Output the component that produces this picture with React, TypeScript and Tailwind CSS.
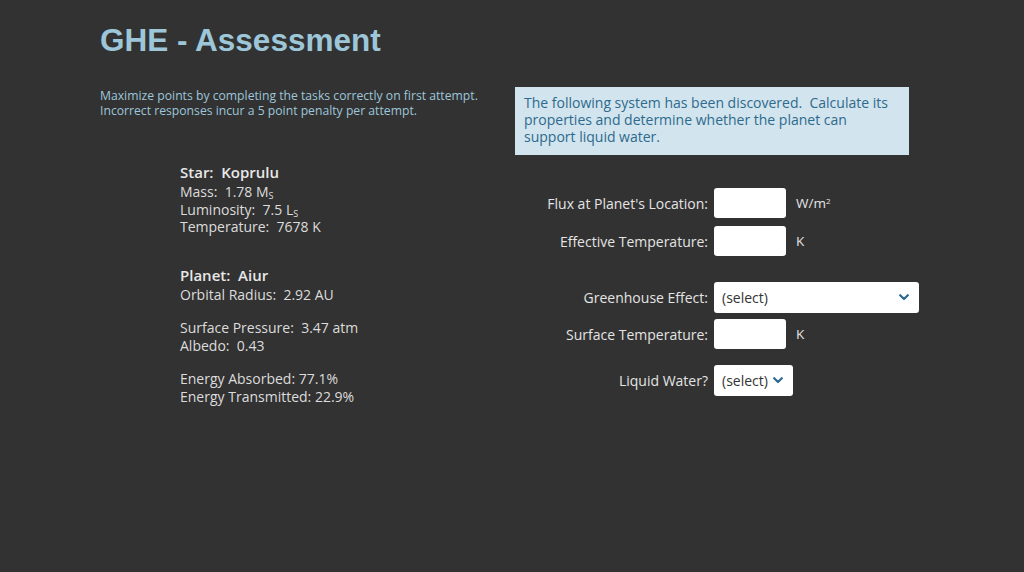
function Chevron() {
  return (
    <svg width="10" height="7" viewBox="0 0 10 7" className="shrink-0">
      <path d="M1.2 1.2 L5 5 L8.8 1.2" fill="none" stroke="#2c6a8f" strokeWidth="2.2" strokeLinecap="round" strokeLinejoin="round" />
    </svg>
  );
}

function Field({ label, unit, className }: { label: string; unit?: React.ReactNode; className?: string }) {
  return (
    <div className={`flex items-center ${className ?? ""}`}>
      <div className="w-[199px] text-right pr-[6px] text-[14px] text-[#e4e4e4]">{label}</div>
      <div className="w-[72px] h-[30px] bg-white rounded-[3px]" />
      {unit && <div className="ml-[10px] text-[13.5px] text-[#e4e4e4]">{unit}</div>}
    </div>
  );
}

function Select({ label, width, className }: { label: string; width: string; className?: string }) {
  return (
    <div className={`flex items-center ${className ?? ""}`}>
      <div className="w-[199px] text-right pr-[6px] text-[14px] text-[#e4e4e4]">{label}</div>
      <div className={`${width} h-[31px] bg-white rounded-[3px] flex items-center justify-between pl-[8px] pr-[10px] text-[14px] text-[#333]`}>
        <span>(select)</span>
        <Chevron />
      </div>
    </div>
  );
}

export default function App() {
  return (
    <div
      className="w-[1024px] h-[572px] bg-[#323232] pl-[100px] overflow-hidden"
      style={{ fontFamily: "'Open Sans', 'Liberation Sans', sans-serif" }}
    >
      <h1
        className="pt-[22px] text-[31.5px] leading-[36px] font-bold text-[#9dc6d9]"
        style={{ fontFamily: "'Liberation Sans', Arial, sans-serif" }}
      >
        GHE - Assessment
      </h1>

      <div className="flex mt-[29px]">
        {/* left column */}
        <div className="w-[415px]">
          <p className="mt-[1px] text-[12.2px] leading-[15px] text-[#9dc6d9]">
            Maximize points by completing the tasks correctly on first attempt.
            <br />
            Incorrect responses incur a 5 point penalty per attempt.
          </p>

          <div className="ml-[80px] mt-[43px] text-[14px] leading-[17.5px] text-[#dcdcdc]">
            <div className="text-[15px] leading-[22px] font-semibold text-[#e8e8e8]">Star:&nbsp; Koprulu</div>
            <div>
              Mass:&nbsp; 1.78 M<sub className="text-[9px] leading-none">S</sub>
            </div>
            <div>
              Luminosity:&nbsp; 7.5 L<sub className="text-[9px] leading-none">S</sub>
            </div>
            <div>Temperature:&nbsp; 7678 K</div>

            <div className="mt-[28px] text-[15px] leading-[22px] font-semibold text-[#e8e8e8]">Planet:&nbsp; Aiur</div>
            <div>Orbital Radius:&nbsp; 2.92 AU</div>

            <div className="mt-[16px]">Surface Pressure:&nbsp; 3.47 atm</div>
            <div>Albedo:&nbsp; 0.43</div>

            <div className="mt-[16px]">Energy Absorbed: 77.1%</div>
            <div>Energy Transmitted: 22.9%</div>
          </div>
        </div>

        {/* right column */}
        <div>
          <div className="w-[394px] h-[68px] bg-[#d2e4ed] px-[9px] pt-[7px] text-[14px] leading-[17px] text-[#2d6a8e]">
            The following system has been discovered.&nbsp; Calculate its properties and determine whether the planet can
            support liquid water.
          </div>

          <Field
            className="mt-[33px]"
            label="Flux at Planet's Location:"
            unit={
              <span>
                W/m<sup className="text-[8px]">2</sup>
              </span>
            }
          />
          <Field className="mt-[8px]" label="Effective Temperature:" unit="K" />
          <Select className="mt-[26px]" label="Greenhouse Effect:" width="w-[205px]" />
          <Field className="mt-[6px]" label="Surface Temperature:" unit="K" />
          <Select className="mt-[16px]" label="Liquid Water?" width="w-[79px]" />
        </div>
      </div>
    </div>
  );
}
